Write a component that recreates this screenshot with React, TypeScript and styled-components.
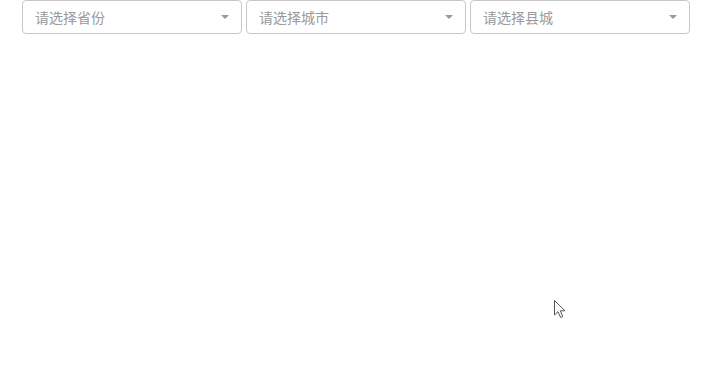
import React from "react";
import styled, { createGlobalStyle } from "styled-components";

const Global = createGlobalStyle`
  html, body { margin: 0; padding: 0; background: #fff; }
  body { width: 717px; height: 375px; overflow: hidden; position: relative;
    font-family: "Noto Sans CJK SC", "Liberation Sans", sans-serif; }
`;

const Page = styled.div`
  width: 717px;
  height: 375px;
  position: relative;
  box-sizing: border-box;
  padding: 0 0 0 22px;
`;

const Row = styled.div`
  display: flex;
  gap: 4px;
`;

const Select = styled.div`
  width: 220px;
  height: 34px;
  box-sizing: border-box;
  border: 1px solid #c8c8c8;
  border-radius: 4px;
  display: flex;
  align-items: center;
  justify-content: space-between;
  padding: 0 12px 0 12px;
  background: #fff;
`;

const Placeholder = styled.span`
  font-size: 14px;
  color: #9a9a9a;
  font-family: "Noto Sans CJK SC", sans-serif;
  line-height: 1;
  margin-top: -1px;
`;

const Caret = styled.span`
  width: 0;
  height: 0;
  border-left: 4px solid transparent;
  border-right: 4px solid transparent;
  border-top: 4px solid #9a9a9a;
  margin-top: 0;
`;

const Cursor = styled.svg`
  position: absolute;
  left: 553px;
  top: 299px;
`;

const items = ["请选择省份", "请选择城市", "请选择县城"];

export default function App() {
  return (
    <>
      <Global />
      <Page>
        <Row>
          {items.map((t) => (
            <Select key={t}>
              <Placeholder>{t}</Placeholder>
              <Caret />
            </Select>
          ))}
        </Row>
        <Cursor width="14" height="22" viewBox="0 0 14 22">
          <path
            d="M1.5 1.5 L1.5 16 L5 12.7 L7.6 18.5 L9.8 17.5 L7.3 11.8 L12 11.8 Z"
            fill="#fff"
            stroke="#555"
            strokeWidth="1"
            strokeLinejoin="round"
          />
        </Cursor>
      </Page>
    </>
  );
}
